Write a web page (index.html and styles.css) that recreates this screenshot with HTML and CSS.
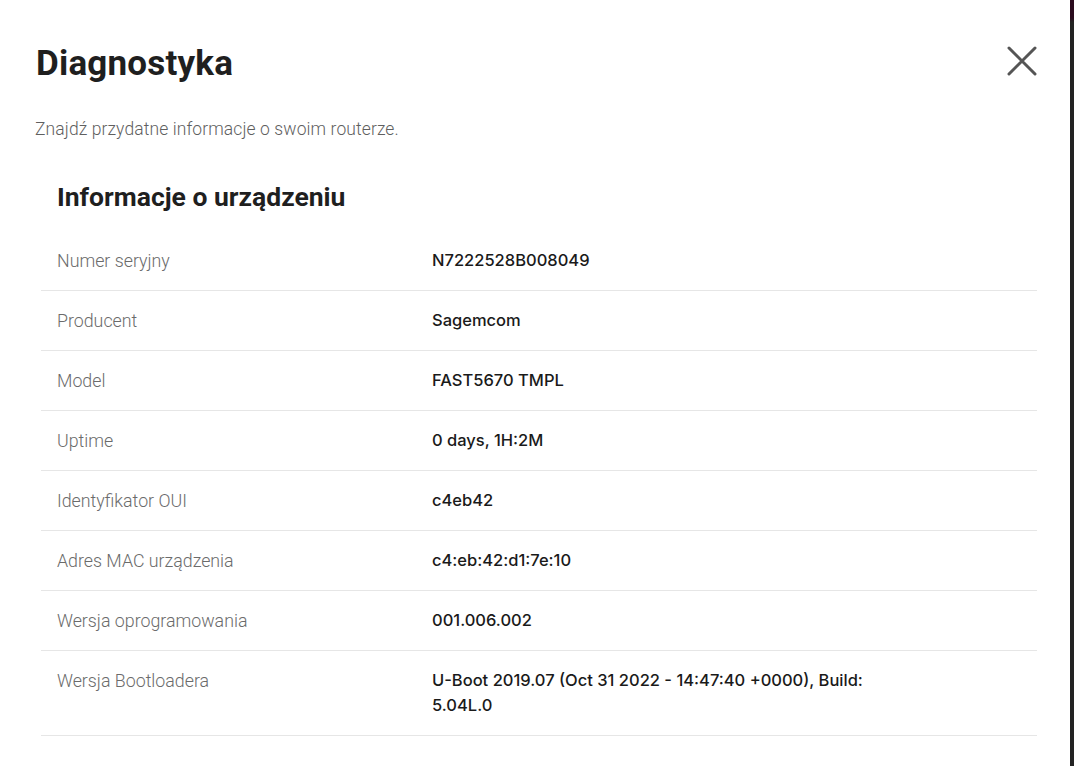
FILE: index.html
```html
<!DOCTYPE html>
<html lang="pl">
<head>
<meta charset="utf-8">
<title>Diagnostyka</title>
<link rel="stylesheet" href="styles.css">
</head>
<body>
<div class="page">
  <main class="modal">
    <header class="modal-header">
      <h1 class="title">Diagnostyka</h1>
      <button class="close" aria-label="Zamknij">
        <svg viewBox="0 0 30 30" width="30" height="30"><path d="M2 2 L28 28 M28 2 L2 28" stroke="#555" stroke-width="3" stroke-linecap="round" fill="none"/></svg>
      </button>
    </header>
    <p class="subtitle">Znajdź przydatne informacje o swoim routerze.</p>
    <section class="section">
      <h2 class="section-title">Informacje o urządzeniu</h2>
      <div class="rows">
        <div class="row"><div class="label">Numer seryjny</div><div class="value">N7222528B008049</div></div>
        <div class="row"><div class="label">Producent</div><div class="value">Sagemcom</div></div>
        <div class="row"><div class="label">Model</div><div class="value">FAST5670 TMPL</div></div>
        <div class="row"><div class="label">Uptime</div><div class="value">0 days, 1H:2M</div></div>
        <div class="row"><div class="label">Identyfikator OUI</div><div class="value">c4eb42</div></div>
        <div class="row"><div class="label">Adres MAC urządzenia</div><div class="value">c4:eb:42:d1:7e:10</div></div>
        <div class="row"><div class="label">Wersja oprogramowania</div><div class="value">001.006.002</div></div>
        <div class="row"><div class="label">Wersja Bootloadera</div><div class="value">U-Boot 2019.07 (Oct 31 2022 - 14:47:40 +0000), Build: 5.04L.0</div></div>
      </div>
    </section>
  </main>
  <div class="edge"></div>
</div>
</body>
</html>
```

FILE: styles.css
```css
* { box-sizing: border-box; }
html, body { margin: 0; padding: 0; height: 100%; }
body {
  font-family: Roboto, "Liberation Sans", sans-serif;
  background: #fff;
  color: #1c1c1c;
  overflow: hidden;
}
.page {
  display: flex;
  height: 766px;
}
.modal {
  flex: 1;
  background: #fff;
  padding: 44px 33px 0 35px;
}
.edge {
  width: 4px;
  background: linear-gradient(to bottom, #2b0b1e 0, #2b0b1e 18px, #232323 22px, #232323 100%);
}
.modal-header {
  display: flex;
  justify-content: space-between;
  align-items: flex-start;
}
.title {
  margin: 0 0 0 1px;
  font-size: 35px;
  line-height: 40px;
  font-weight: 700;
  color: #1f1f1f;
  letter-spacing: 0.2px;
}
.close {
  border: 0;
  background: none;
  padding: 0;
  margin-top: 2px;
  width: 30px;
  height: 30px;
  cursor: pointer;
  display: flex;
}
.subtitle {
  margin: 33px 0 0 0;
  font-size: 17.5px;
  line-height: 24px;
  font-weight: 300;
  color: #5f5f5f;
  letter-spacing: 0.1px;
}
.section {
  margin: 0 0 0 6px;
}
.section-title {
  margin: 40px 0 0 0;
  padding-left: 16px;
  font-size: 26.5px;
  line-height: 32px;
  font-weight: 700;
  color: #1f1f1f;
}
.rows {
  margin-top: 18px;
}
.row {
  display: grid;
  grid-template-columns: 375px 455px 1fr;
  padding: 17px 0 17px 16px;
  border-bottom: 1px solid #e6e6e6;
  line-height: 25px;
}
.label {
  color: #6b6b6b;
  font-weight: 300;
  font-size: 17.8px;
}
.value {
  font-family: Inter, Roboto, sans-serif;
  color: #1a1a1a;
  font-weight: 500;
  font-size: 16.5px;
}
```
